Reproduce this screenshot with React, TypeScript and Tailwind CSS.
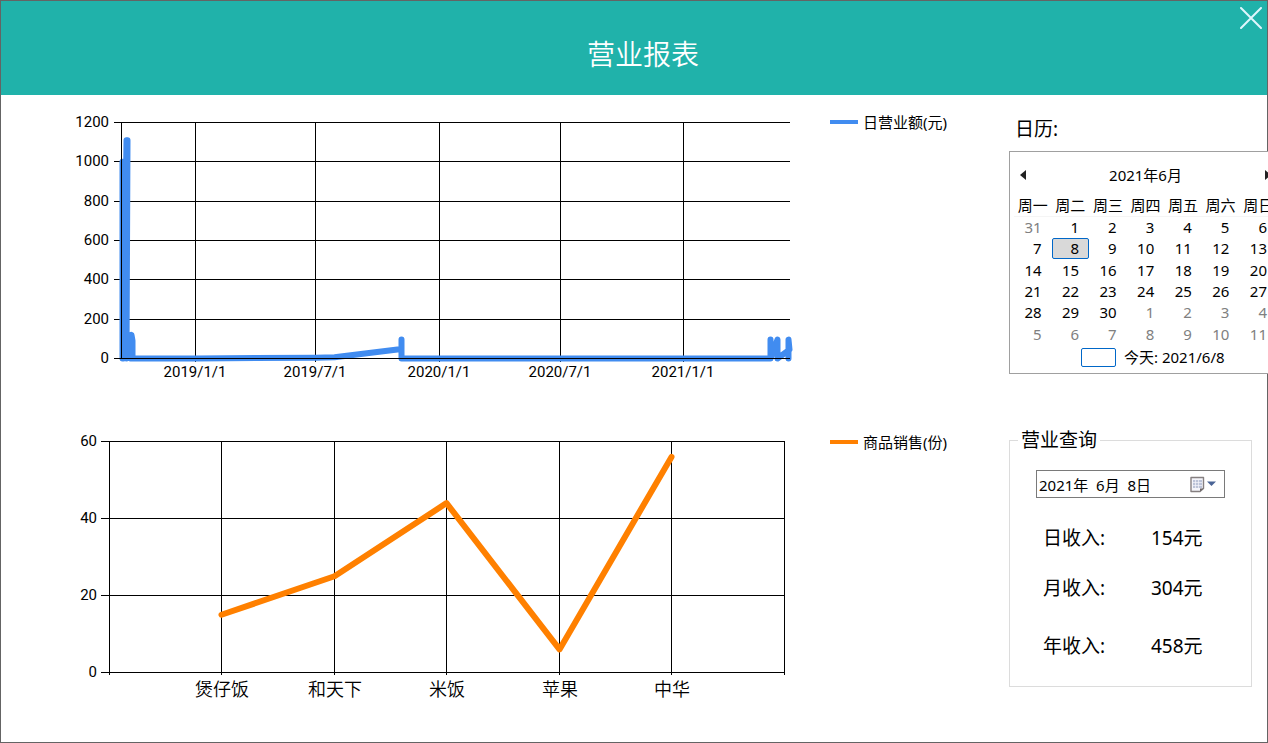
import { useState } from "react";
import clsx from "clsx";

const WEEKDAYS = ["周一", "周二", "周三", "周四", "周五", "周六", "周日"];

const WEEKS = [
  [31, 1, 2, 3, 4, 5, 6],
  [7, 8, 9, 10, 11, 12, 13],
  [14, 15, 16, 17, 18, 19, 20],
  [21, 22, 23, 24, 25, 26, 27],
  [28, 29, 30, 1, 2, 3, 4],
  [5, 6, 7, 8, 9, 10, 11],
];

const INCOME = [
  { label: "日收入:", value: "154元", className: "mt-[26px]" },
  { label: "月收入:", value: "304元", className: "mt-[22px]" },
  { label: "年收入:", value: "458元", className: "mt-[30px]" },
];

// [x, turnover]
const TURNOVER: [number, number][] = [
  [62, 0],
  [62, 520],
  [62, 0],
  [62, 1000],
  [63, 0],
  [66, 1110],
  [66, 0],
  [67, 1110],
  [66, 0],
  [71, 120],
  [70, 0],
  [71, 120],
  [72, 90],
  [72, 0],
  [135, 0],
  [255, 4],
  [274, 6],
  [341, 48],
  [341, 96],
  [341, 0],
  [710, 0],
  [710, 96],
  [710, 0],
  [717, 96],
  [717, 0],
  [729, 45],
  [728, 96],
  [728, 0],
];

const SALES = [
  { name: "煲仔饭", count: 15 },
  { name: "和天下", count: 25 },
  { name: "米饭", count: 44 },
  { name: "苹果", count: 6 },
  { name: "中华", count: 56 },
];

const MONTHS = [
  { x: 135, label: "2019/1/1" },
  { x: 255, label: "2019/7/1" },
  { x: 379, label: "2020/1/1" },
  { x: 500, label: "2020/7/1" },
  { x: 623, label: "2021/1/1" },
];

const toPoints = (points: number[][]) =>
  points.map((point) => point.join(",")).join(" ");

const TurnoverChart = () => {
  const left = 61;
  const right = 730;
  const top = 12;
  const bottom = 248;
  const y = (value: number) => bottom - (value / 1200) * (bottom - top);

  return (
    <svg
      viewBox="0 0 740 280"
      role="img"
      aria-label="日营业额(元)"
      className="min-w-0 flex-1 font-['Roboto',sans-serif] text-[15px]"
    >
      <g stroke="#000" shapeRendering="crispEdges">
        {[200, 400, 600, 800, 1000, 1200].map((tick) => (
          <line
            key={tick}
            x1={left - 7}
            x2={right}
            y1={Math.round(y(tick)) + 0.5}
            y2={Math.round(y(tick)) + 0.5}
          />
        ))}
        {MONTHS.map(({ x, label }) => (
          <line
            key={label}
            x1={x + 0.5}
            x2={x + 0.5}
            y1={top}
            y2={bottom + 4}
          />
        ))}
      </g>
      <polyline
        points={toPoints(TURNOVER.map(([x, value]) => [x + 0.5, y(value) + 0.5]))}
        fill="none"
        stroke="#418cf0"
        strokeWidth="6"
        strokeLinejoin="round"
        strokeLinecap="round"
      />
      <g stroke="#000" shapeRendering="crispEdges">
        <line x1={left - 7} x2={right} y1={bottom + 0.5} y2={bottom + 0.5} />
        <line x1={left + 0.5} x2={left + 0.5} y1={top} y2={bottom + 1} />
      </g>
      <g textAnchor="end">
        {[0, 200, 400, 600, 800, 1000, 1200].map((tick) => (
          <text key={tick} x={left - 12} y={y(tick) + 5}>
            {tick}
          </text>
        ))}
      </g>
      <g textAnchor="middle">
        {MONTHS.map(({ x, label }) => (
          <text key={label} x={x} y={bottom + 19}>
            {label}
          </text>
        ))}
      </g>
    </svg>
  );
};

const SalesChart = () => {
  const left = 49;
  const right = 724;
  const top = 11;
  const bottom = 242;
  const step = (right - left) / (SALES.length + 1);
  const x = (index: number) => left + Math.floor(step * index);
  const y = (value: number) => bottom - (value / 60) * (bottom - top);

  return (
    <svg
      viewBox="0 0 740 280"
      role="img"
      aria-label="商品销售(份)"
      className="min-w-0 flex-1 font-['Roboto','Noto_Sans_CJK_SC',sans-serif] text-[15px]"
    >
      <g stroke="#000" shapeRendering="crispEdges">
        {[0, 20, 40, 60].map((tick) => (
          <line
            key={tick}
            x1={left - 8}
            x2={right + 1}
            y1={y(tick) + 0.5}
            y2={y(tick) + 0.5}
          />
        ))}
        {[0, 1, 2, 3, 4, 5, 6].map((index) => (
          <line
            key={index}
            x1={x(index) + 0.5}
            x2={x(index) + 0.5}
            y1={top}
            y2={bottom + 3}
          />
        ))}
      </g>
      <polyline
        points={toPoints(
          SALES.map(({ count }, index) => [x(index + 1) + 0.5, y(count) + 0.5]),
        )}
        fill="none"
        stroke="#ff8000"
        strokeWidth="6"
        strokeLinejoin="round"
        strokeLinecap="round"
      />
      <g textAnchor="end">
        {[0, 20, 40, 60].map((tick) => (
          <text key={tick} x={left - 12} y={y(tick) + 5}>
            {tick}
          </text>
        ))}
      </g>
      <g textAnchor="middle" className="text-[18px] font-[350]">
        {SALES.map(({ name }, index) => (
          <text key={name} x={x(index + 1) + 1} y={bottom + 24}>
            {name}
          </text>
        ))}
      </g>
    </svg>
  );
};

const ChartLegend = ({ label, color }: { label: string; color: string }) => (
  <div className="ml-[30px] flex w-[179px] shrink-0 items-center gap-[5px] text-[15px] leading-6">
    <span className={clsx("h-1 w-7", color)} />
    {label}
  </div>
);

const MonthCalendar = () => {
  const [selected, setSelected] = useState("1-1");

  return (
    <div className="mt-2 w-[273px] border border-[#a0a0a0] bg-white px-1 pb-1 text-[15px]">
      <div className="flex h-[42px] items-center justify-between px-[6px] pt-1">
        <button type="button" aria-label="上个月">
          <svg viewBox="0 0 6 10" className="h-[10px] w-[6px]" fill="#222">
            <path d="M6 0v10L0 5z" />
          </svg>
        </button>
        <span>2021年6月</span>
        <button type="button" aria-label="下个月">
          <svg viewBox="0 0 6 10" className="h-[10px] w-[6px]" fill="#222">
            <path d="M0 0v10l6-5z" />
          </svg>
        </button>
      </div>
      <table className="h-[151px] w-full table-fixed">
        <thead>
          <tr className="border-b border-[#f5f5f5]">
            {WEEKDAYS.map((day) => (
              <th key={day} className="h-[22px] p-0 font-normal leading-5">
                {day}
              </th>
            ))}
          </tr>
        </thead>
        <tbody>
          {WEEKS.map((week, row) => (
            <tr key={row}>
              {week.map((day, col) => {
                const key = `${row}-${col}`;
                const outside =
                  (row === 0 && day > 7) || (row > 3 && day < 15);
                return (
                  <td key={key} className="p-0">
                    <button
                      type="button"
                      onClick={() => setSelected(key)}
                      className={clsx(
                        "block h-[21px] w-full rounded-xs border pr-[9px] text-right leading-[19px]",
                        selected === key
                          ? "border-[#0067c8] bg-[#d9d9d9]"
                          : "border-transparent",
                        outside ? "text-[#808080]" : "text-black",
                      )}
                    >
                      {day}
                    </button>
                  </td>
                );
              })}
            </tr>
          ))}
        </tbody>
      </table>
      <button
        type="button"
        className="flex h-6 w-full items-center gap-2 pl-[67px]"
      >
        <span className="h-[19px] w-[35px] rounded-xs border border-[#0067c8]" />
        今天: 2021/6/8
      </button>
    </div>
  );
};

const DatePicker = () => {
  const [date, setDate] = useState("2021年  6月  8日");

  return (
    <div className="mx-[18px] mt-4 flex h-7 items-center border border-[#7a7a7a]">
      <input
        type="text"
        aria-label="查询日期"
        value={date}
        onChange={(event) => setDate(event.target.value)}
        className="h-full w-0 flex-1 bg-transparent pl-[2px] text-[15px] outline-none"
      />
      <button type="button" aria-label="选择日期" className="mr-2">
        <svg viewBox="0 0 26 17" className="h-[17px] w-[26px]">
          <path
            d="M1 1.5h12.5v11l-3.5 3H1z"
            fill="#f4f4fa"
            stroke="#857f80"
            strokeWidth="1.4"
            strokeLinejoin="round"
          />
          <path d="M3 4h9v8H3z" fill="#bcc3d8" />
          <path
            d="M3 6.5h9M3 9.5h9M5.5 4v8M8.5 4v8"
            stroke="#f4f4fa"
            strokeWidth="0.7"
          />
          <path d="M10 15.5v-3h3.5z" fill="#6d6668" />
          <path d="M17 5.5h9L21.500 10z" fill="#4a6496" />
        </svg>
      </button>
    </div>
  );
};

export default function App() {
  return (
    <div className="flex min-h-screen flex-col border border-[#646464] bg-white font-['Noto_Sans','Noto_Sans_CJK_SC',sans-serif] text-black">
      <header className="flex h-[94px] items-center bg-[#20b2aa]">
        <h1 className="flex-1 pt-3 pl-[50px] text-center text-[28px] font-[350] text-white">
          营业报表
        </h1>
        <button
          type="button"
          aria-label="关闭"
          className="flex h-[34px] w-8 items-center justify-center self-start"
        >
          <svg
            viewBox="0 0 22 22"
            className="size-[22px]"
            stroke="#dff6fd"
            strokeWidth="2"
            strokeLinecap="round"
          >
            <path d="M1 1l20 20M21 1L1 21" />
          </svg>
        </button>
      </header>

      <main className="-mr-px flex flex-1 overflow-hidden">
        <div className="flex min-w-0 flex-1 flex-col gap-10 pt-[15px] pl-[59px]">
          <section className="flex items-start">
            <TurnoverChart />
            <ChartLegend label="日营业额(元)" color="bg-[#418cf0]" />
          </section>
          <section className="flex items-start">
            <SalesChart />
            <ChartLegend label="商品销售(份)" color="bg-[#ff8000]" />
          </section>
        </div>

        <aside className="w-[259px] shrink-0 pt-5">
          <h2 className="pl-[6px] text-[19px] leading-7">日历:</h2>
          <MonthCalendar />

          <fieldset className="mt-[52px] mr-4 min-w-0 border border-[#dcdcdc] px-2 pb-[26px] text-[19px] leading-7">
            <legend className="px-[3px]">营业查询</legend>
            <DatePicker />
            <dl className="pl-[25px]">
              {INCOME.map(({ label, value, className }) => (
                <div key={label} className={clsx("flex", className)}>
                  <dt className="w-[108px]">{label}</dt>
                  <dd>{value}</dd>
                </div>
              ))}
            </dl>
          </fieldset>
        </aside>
      </main>
    </div>
  );
}
